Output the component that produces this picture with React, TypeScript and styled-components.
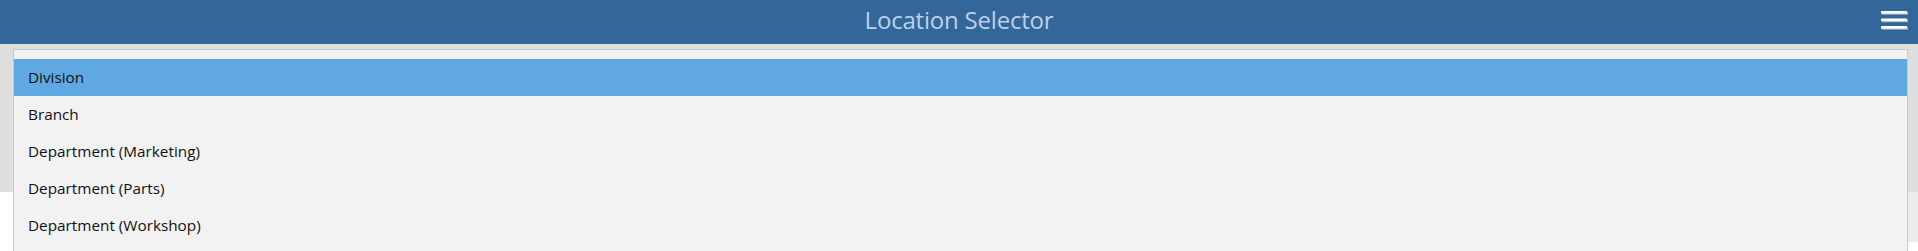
import React, { useState } from 'react';
import styled, { createGlobalStyle } from 'styled-components';

const GlobalStyle = createGlobalStyle`
  html, body {
    margin: 0;
    padding: 0;
    background: #ffffff;
  }

  body {
    font-family: 'Open Sans', 'Noto Sans', 'Liberation Sans', sans-serif;
  }
`;

const Page = styled.div`
  position: relative;
  width: 100%;
  height: 251px;
  overflow: hidden;
  background: #ffffff;
`;

const Header = styled.header`
  display: grid;
  grid-template-columns: 1fr auto 1fr;
  align-items: start;
  height: 44px;
  background: #336699;
`;

const Title = styled.h1`
  grid-column: 2;
  margin: 0;
  padding-top: 3px;
  font-size: 24px;
  font-weight: 400;
  line-height: 34px;
  color: #b9d2ec;
  letter-spacing: -0.2px;
`;

const MenuButton = styled.button`
  grid-column: 3;
  justify-self: end;
  margin: 11px 10px 0 0;
  padding: 0;
  border: none;
  background: none;
  line-height: 0;
  cursor: pointer;
`;

const Backdrop = styled.div`
  height: 148px;
  background: #dedede;
`;

const Lower = styled.div`
  display: flex;
  justify-content: flex-end;
`;

const Track = styled.div`
  width: 10px;
  height: 50px;
  background: #ececec;
`;

const Dropdown = styled.ul`
  position: absolute;
  top: 49px;
  left: 13px;
  right: 10px;
  bottom: -10px;
  margin: 0;
  padding: 9px 0 0;
  list-style: none;
  background: #f2f2f2;
  border: 1px solid #c9c9c9;
`;

const Option = styled.li<{ $selected?: boolean }>`
  display: flex;
  align-items: center;
  box-sizing: border-box;
  height: 37px;
  padding: 0 0 2px 14px;
  font-size: 15.3px;
  color: #111111;
  background: ${(p) => (p.$selected ? '#60a8e2' : 'transparent')};
  cursor: pointer;
`;

const options = [
  'Division',
  'Branch',
  'Department (Marketing)',
  'Department (Parts)',
  'Department (Workshop)',
];

const MenuIcon = () => (
  <svg width="27" height="19" viewBox="0 0 27 19">
    {[0, 7.5, 15].map((y) => (
      <g key={y}>
        <rect x="1" y={y + 1} width="26" height="2.7" fill="#9fb3c9" />
        <rect x="0" y={y} width="26" height="2.7" fill="#ffffff" />
      </g>
    ))}
  </svg>
);

const App = () => {
  const [selected, setSelected] = useState<number>(0);

  return (
    <Page>
      <GlobalStyle />
      <Header>
        <Title>Location Selector</Title>
        <MenuButton aria-label="menu">
          <MenuIcon />
        </MenuButton>
      </Header>
      <Backdrop />
      <Lower>
        <Track />
      </Lower>
      <Dropdown>
        {options.map((option, index) => (
          <Option
            key={option}
            $selected={index === selected}
            onClick={() => setSelected(index)}
          >
            {option}
          </Option>
        ))}
      </Dropdown>
    </Page>
  );
};

export default App;
